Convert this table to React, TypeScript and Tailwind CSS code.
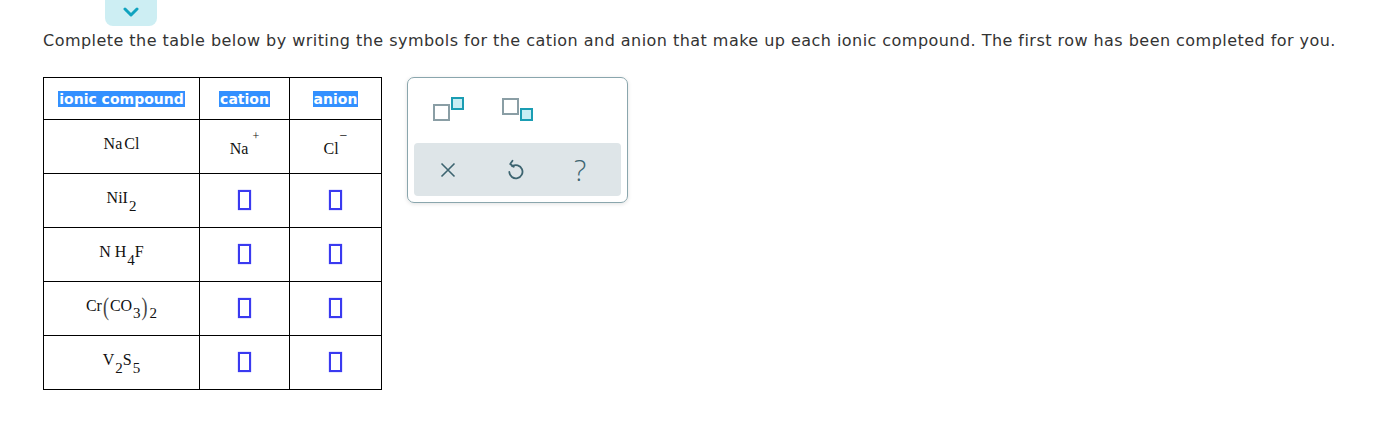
import React from 'react';

const serif = { fontFamily: '"Liberation Serif", "Times New Roman", serif' };

const Sub = ({ children }: { children: React.ReactNode }) => (
    <span className="relative top-[8px] text-[15px] ml-[1px]" style={serif}>{children}</span>
);

const AnswerBox = () => (
    <div className="w-[13px] h-[20px] border-2 border-[#3a3af0] shadow-[0_0_1px_#6a6aff]"></div>
);

const Paren = ({ children }: { children: React.ReactNode }) => (
    <span className="inline-block text-[18px] text-[#444] scale-y-[1.45] leading-none mx-[1px]">{children}</span>
);

const rows: { formula: React.ReactNode; cation?: React.ReactNode; anion?: React.ReactNode }[] = [
    {
        formula: <span>Na<span className="ml-[2px]">Cl</span></span>,
        cation: <span className="relative top-[3px]">Na<span className="relative top-[-14px] text-[12px] ml-[4px]">+</span></span>,
        anion: <span className="relative top-[3px]">Cl<span className="relative top-[-14px] text-[14px] ml-[1px]">−</span></span>,
    },
    { formula: <span>NiI<Sub>2</Sub></span> },
    { formula: <span>N H<Sub>4</Sub>F</span> },
    {
        formula: (
            <span className="flex items-center">
                Cr<Paren>(</Paren>CO<Sub>3</Sub><Paren>)</Paren><Sub>2</Sub>
            </span>
        ),
    },
    { formula: <span>V<Sub>2</Sub>S<Sub>5</Sub></span> },
];

const HeaderLabel = ({ children }: { children: React.ReactNode }) => (
    <span className="bg-[#3390ff] text-white font-bold text-[14px] leading-[17px] px-[1px]">{children}</span>
);

export default function App() {
    return (
        <div className="w-[1378px] h-[423px] bg-white overflow-hidden" style={{ fontFamily: '"DejaVu Sans", Verdana, sans-serif' }}>
            {/* collapse button */}
            <div className="pl-[105px]">
                <div className="w-[52px] h-[26px] bg-[#cdeef3] rounded-b-[8px] flex items-center justify-center pb-[3px]">
                    <svg width="16" height="10" viewBox="0 0 16 10">
                        <path d="M2 2 L8 8 L14 2" fill="none" stroke="#10a3bf" strokeWidth="3" strokeLinecap="round" strokeLinejoin="round" />
                    </svg>
                </div>
            </div>

            <p className="pl-[43px] mt-[5px] text-[16px] leading-[20px] tracking-[0.46px] text-[#333]">
                Complete the table below by writing the symbols for the cation and anion that make up each ionic compound. The first row has been completed for you.
            </p>

            <div className="flex items-start pl-[43px] mt-[26px] gap-[25px]">
                {/* table */}
                <table className="border-collapse border border-black" style={{ tableLayout: 'fixed' }}>
                    <thead>
                        <tr className="h-[42px]">
                            <th className="w-[156px] border border-black text-center align-middle"><HeaderLabel>ionic compound</HeaderLabel></th>
                            <th className="w-[90px] border border-black text-center align-middle"><HeaderLabel>cation</HeaderLabel></th>
                            <th className="w-[92px] border border-black text-center align-middle"><HeaderLabel>anion</HeaderLabel></th>
                        </tr>
                    </thead>
                    <tbody style={serif} className="text-[16px] text-[#111]">
                        {rows.map((row, i) => (
                            <tr key={i} className="h-[54px]">
                                <td className="border border-black">
                                    <div className="flex justify-center items-center -mt-[6px]">{row.formula}</div>
                                </td>
                                <td className="border border-black">
                                    <div className="flex justify-center items-center -mt-[2px]">{row.cation ?? <AnswerBox />}</div>
                                </td>
                                <td className="border border-black">
                                    <div className="flex justify-center items-center -mt-[2px]">{row.anion ?? <AnswerBox />}</div>
                                </td>
                            </tr>
                        ))}
                    </tbody>
                </table>

                {/* tool panel */}
                <div className="w-[221px] h-[126px] border border-[#8aa6ad] rounded-[7px] shadow-[0_1px_4px_rgba(0,0,0,0.12)] flex flex-col px-[6px] pb-[6px]">
                    <div className="h-[65px] flex items-start pt-[19px] pl-[19px] gap-[38px]">
                        {/* superscript */}
                        <div className="flex h-[24px] gap-[1px]">
                            <div className="self-end w-[17px] h-[17px] border-2 border-[#8a9ea5]"></div>
                            <div className="self-start w-[13px] h-[13px] border-2 border-[#1a9db3] bg-[#c8eef4]"></div>
                        </div>
                        {/* subscript */}
                        <div className="flex h-[23px] gap-[1px] mt-[1px]">
                            <div className="self-start w-[17px] h-[17px] border-2 border-[#8a9ea5]"></div>
                            <div className="self-end w-[13px] h-[13px] border-2 border-[#1a9db3] bg-[#c8eef4]"></div>
                        </div>
                    </div>
                    <div className="flex-1 bg-[#dee5e8] rounded-[4px] flex items-center pl-[26px] gap-[50px]">
                        <svg width="16" height="16" viewBox="0 0 16 16">
                            <path d="M1.5 1.5 L14.5 14.5 M14.5 1.5 L1.5 14.5" stroke="#3d6470" strokeWidth="1.6" fill="none" />
                        </svg>
                        <svg width="18" height="21" viewBox="0 0 18 21">
                            <path d="M6.2 7.2 A6.6 6.6 0 1 1 3.3 13" fill="none" stroke="#3d6470" strokeWidth="1.8" strokeLinecap="round" />
                            <path d="M6.5 1.8 L4.2 5 L7.8 7.8" fill="none" stroke="#3d6470" strokeWidth="1.8" strokeLinecap="round" strokeLinejoin="round" />
                        </svg>
                        <span className="text-[29px] leading-none text-[#3d6470] font-light" style={{ fontFamily: '"Open Sans", "Noto Sans", sans-serif' }}>?</span>
                    </div>
                </div>
            </div>
        </div>
    );
}
